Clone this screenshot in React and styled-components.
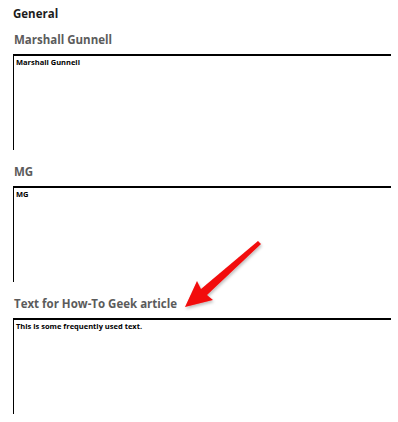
import React from "react";
import styled, { createGlobalStyle } from "styled-components";

const GlobalStyle = createGlobalStyle`
  html, body {
    margin: 0;
    padding: 0;
    background: #ffffff;
  }
  body {
    font-family: "Open Sans", "Noto Sans", sans-serif;
  }
`;

const fields = [
  { label: "Marshall Gunnell", value: "Marshall Gunnell" },
  { label: "MG", value: "MG" },
  { label: "Text for How-To Geek article", value: "This is some frequently used text." },
];

export default function App() {
  return (
    <>
      <GlobalStyle />
      <Page>
        <Title>General</Title>
        {fields.map((field) => (
          <Field key={field.label}>
            <Label>{field.label}</Label>
            <ValueBox>{field.value}</ValueBox>
          </Field>
        ))}
        <Arrow viewBox="0 0 398 422" aria-hidden="true">
          <defs>
            <filter id="arrowShadow" x="-20%" y="-20%" width="140%" height="140%">
              <feDropShadow dx="1" dy="2" stdDeviation="1.5" floodColor="#000" floodOpacity="0.25" />
            </filter>
          </defs>
          <polygon
            points="258,241 261,244 207,295 213,300 185,307 197,281 201,289"
            fill="#f20a0a"
            filter="url(#arrowShadow)"
          />
        </Arrow>
      </Page>
    </>
  );
}

const Page = styled.div`
  position: relative;
  width: 398px;
  height: 422px;
  box-sizing: border-box;
  padding: 6px 8px 0 13px;
  overflow: hidden;
`;

const Title = styled.div`
  font-size: 11.5px;
  line-height: 16px;
  font-weight: 700;
  color: #1c1c1c;
  margin-bottom: 10px;
`;

const Field = styled.div`
  display: flex;
  flex-direction: column;
  margin-bottom: 14px;
`;

const Label = styled.div`
  font-size: 11.5px;
  line-height: 16px;
  font-weight: 700;
  color: #5b5b5b;
  padding-left: 1px;
  margin-bottom: 6px;
`;

const ValueBox = styled.div`
  width: 378px;
  height: 96px;
  box-sizing: border-box;
  border-top: 2px solid #000;
  border-left: 1px solid #000;
  padding: 1px 2px;
  font-size: 7.5px;
  line-height: 10px;
  font-weight: 700;
  color: #000;
`;

const Arrow = styled.svg`
  position: absolute;
  left: 0;
  top: 0;
  width: 398px;
  height: 422px;
  pointer-events: none;
`;
